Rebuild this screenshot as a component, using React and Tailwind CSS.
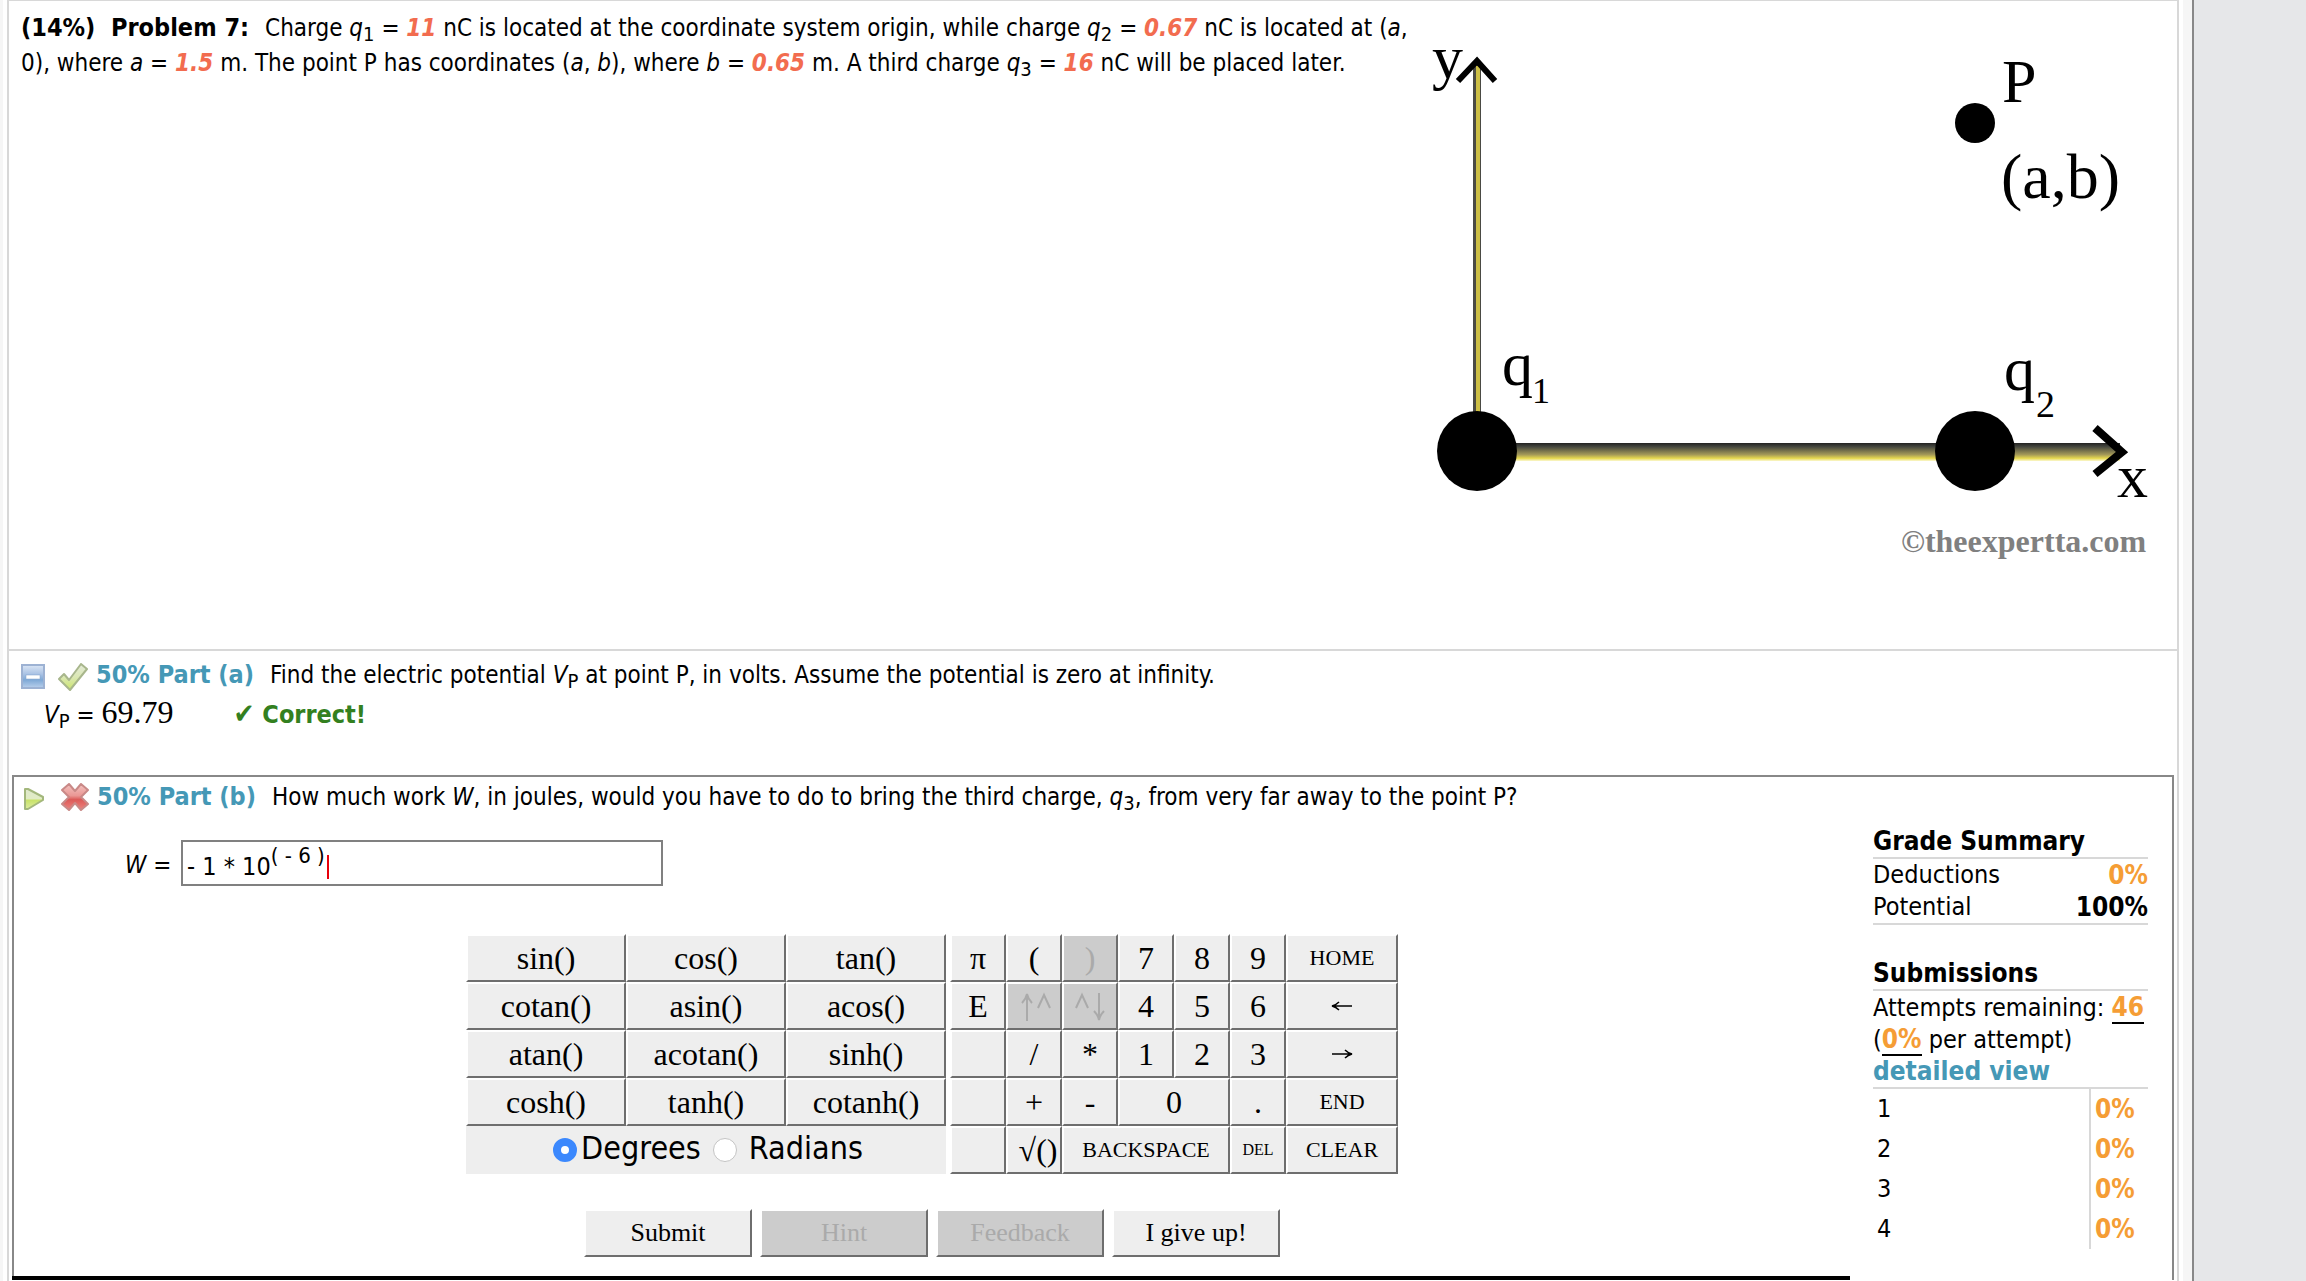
import React, { useState } from "react";

const functionKeys = [
  "sin()",
  "cos()",
  "tan()",
  "cotan()",
  "asin()",
  "acos()",
  "atan()",
  "acotan()",
  "sinh()",
  "cosh()",
  "tanh()",
  "cotanh()",
];

const UpPower = () => (
  <svg viewBox="0 0 30 30" className="mt-0.5 ml-1 size-[30px]" fill="none" stroke="currentColor" strokeWidth="2">
    <path d="M6 29 V2 M1 11 Q5 7 6 2 Q7 7 11 11" />
    <path d="M17 16 L23 3 L29 16" />
  </svg>
);

const DownPower = () => (
  <svg viewBox="0 0 30 30" className="mt-0.5 size-[30px]" fill="none" stroke="currentColor" strokeWidth="2">
    <path d="M1 16 L7 3 L13 16" />
    <path d="M24 1 V28 M19 19 Q23 23 24 28 Q25 23 29 19" />
  </svg>
);

const LeftArrow = () => (
  <svg viewBox="0 0 22 10" className="h-[10px] w-[22px]" fill="none" stroke="currentColor" strokeWidth="1.5">
    <path d="M21 5 H2 M8 1 Q5 4 1 5 Q5 6 8 9" />
  </svg>
);

const RightArrow = () => (
  <svg viewBox="0 0 22 10" className="h-[10px] w-[22px]" fill="none" stroke="currentColor" strokeWidth="1.5">
    <path d="M1 5 H20 M14 1 Q17 4 21 5 Q17 6 14 9" />
  </svg>
);

const padKeys = [
  { label: "π" },
  { label: "(" },
  { label: ")", disabled: true },
  { label: "7" },
  { label: "8" },
  { label: "9" },
  { label: "HOME", size: "text-[22px]" },
  { label: "E" },
  { label: <UpPower />, name: "Power up", disabled: true },
  { label: <DownPower />, name: "Power down", disabled: true },
  { label: "4" },
  { label: "5" },
  { label: "6" },
  { label: <LeftArrow />, name: "Left" },
  { label: "" },
  { label: "/" },
  { label: "*" },
  { label: "1" },
  { label: "2" },
  { label: "3" },
  { label: <RightArrow />, name: "Right" },
  { label: "" },
  { label: "+" },
  { label: "-" },
  { label: "0", span: "col-span-2" },
  { label: "." },
  { label: "END", size: "text-[22px]" },
  { label: "" },
  { label: "√()", span: "pl-2" },
  { label: "BACKSPACE", size: "text-[22px]", span: "col-span-3" },
  { label: "DEL", size: "text-base" },
  { label: "CLEAR", size: "text-[22px]" },
];

const submissions = [1, 2, 3, 4];

const Key = ({ label, name, disabled, size = "text-[32px]", span = "" }) => (
  <button
    type="button"
    aria-label={name}
    disabled={disabled}
    className={`flex h-12 items-center justify-center whitespace-nowrap border-2 border-t-white border-l-white border-r-[#6e6e6e] border-b-[#6e6e6e] pb-px font-['Liberation_Serif',serif] leading-8 ${size} ${span} ${
      disabled ? "bg-[#ccc] text-[#aaa]" : "bg-[#eee] text-black"
    }`}
  >
    {label}
  </button>
);

const Value = ({ children }) => (
  <b className="italic text-[#f26c4f]">{children}</b>
);

const Sub = ({ children }) => <sub className="text-xl leading-none">{children}</sub>;

const Diagram = () => (
  <svg
    viewBox="0 0 750 560"
    className="mt-[19px] mr-3 h-[560px] w-[750px] shrink-0 font-['Liberation_Serif',serif]"
    fontSize="62"
    role="img"
    aria-label="Charges on the coordinate axes"
  >
    <defs>
      <linearGradient id="xAxis" x1="0" y1="0" x2="0" y2="1">
        <stop offset="0" stopColor="#222" />
        <stop offset="0.2" stopColor="#44463e" />
        <stop offset="0.65" stopColor="#a59a58" />
        <stop offset="0.85" stopColor="#e6d84e" />
        <stop offset="1" stopColor="#fbf8d0" />
      </linearGradient>
    </defs>
    {/* y axis */}
    <rect x="58" y="42" width="8" height="360" fill="#4a4a44" />
    <rect x="61" y="46" width="4" height="356" fill="#cdbf45" />
    <path d="M43 61 L62 41 L80 61" fill="none" stroke="#000" strokeWidth="6" />
    {/* x axis */}
    <rect x="62" y="423" width="643" height="18" fill="url(#xAxis)" />
    <path d="M680 408 L707 432 L680 454" fill="none" stroke="#000" strokeWidth="8" />

    <circle cx="62" cy="431" r="40" />
    <circle cx="560" cy="431" r="40" />
    <circle cx="560" cy="103" r="20" />

    <text x="17" y="58">y</text>
    <text x="587" y="82">P</text>
    <text x="586" y="178" fontSize="64">(a,b)</text>
    <text x="87" y="365">q</text>
    <text x="117" y="383" fontSize="36">1</text>
    <text x="589" y="370">q</text>
    <text x="621" y="397" fontSize="38">2</text>
    <text x="702" y="477">x</text>
    <text x="486" y="532" fontSize="32" fontWeight="bold" fill="#808080">
      ©theexpertta.com
    </text>
  </svg>
);

const CollapseIcon = () => (
  <svg viewBox="0 0 26 28" className="mt-1 h-7 w-[26px] shrink-0">
    <defs>
      <linearGradient id="collapse" x1="0" y1="0" x2="0" y2="1">
        <stop offset="0" stopColor="#dbe6f5" />
        <stop offset="0.4" stopColor="#a9c2e4" />
        <stop offset="0.65" stopColor="#7fa9d6" />
        <stop offset="1" stopColor="#b9d0ec" />
      </linearGradient>
    </defs>
    <rect x="2" y="2" width="22" height="23" fill="url(#collapse)" stroke="#9db2d3" strokeWidth="2" />
    <rect x="6" y="12" width="14" height="4" fill="#fff" stroke="#7f9fcb" strokeWidth="0.5" />
  </svg>
);

const CheckIcon = () => (
  <svg viewBox="0 0 30 28" className="mt-1 h-7 w-[30px] shrink-0">
    <defs>
      <linearGradient id="check" x1="0" y1="0" x2="0" y2="1">
        <stop offset="0" stopColor="#e3e9d8" />
        <stop offset="0.5" stopColor="#dbe8b4" />
        <stop offset="1" stopColor="#cbe56c" />
      </linearGradient>
    </defs>
    <path
      d="M1 16 L6 11 L11 17 L23 1 L29 6 L12 27 Z"
      fill="url(#check)"
      stroke="#a8b68c"
      strokeWidth="2"
      strokeLinejoin="round"
    />
  </svg>
);

const PlayIcon = () => (
  <svg viewBox="0 0 24 24" className="mt-1 h-6 w-6 shrink-0">
    <defs>
      <linearGradient id="play" x1="0" y1="0" x2="0" y2="1">
        <stop offset="0" stopColor="#dfe8cd" />
        <stop offset="0.5" stopColor="#e1ecc4" />
        <stop offset="0.55" stopColor="#c8e268" />
        <stop offset="1" stopColor="#dcec9e" />
      </linearGradient>
    </defs>
    <path
      d="M3 2 L6 2 L21 10 L21 13 L6 22 L3 22 Z"
      fill="url(#play)"
      stroke="#a3b77c"
      strokeWidth="2"
      strokeLinejoin="round"
    />
  </svg>
);

const CrossIcon = () => (
  <svg viewBox="0 0 28 28" className="h-7 w-7 shrink-0">
    <defs>
      <linearGradient id="cross" x1="0" y1="0" x2="0" y2="1">
        <stop offset="0" stopColor="#f3c3c0" />
        <stop offset="0.45" stopColor="#ea9794" />
        <stop offset="0.6" stopColor="#dc5a58" />
        <stop offset="1" stopColor="#ee8580" />
      </linearGradient>
    </defs>
    <path
      d="M8 1 L14 8 L20 1 L27 7 L20 14 L27 21 L20 27 L14 20 L8 27 L1 21 L8 14 L1 7 Z"
      fill="url(#cross)"
      stroke="#c98987"
      strokeWidth="2"
      strokeLinejoin="round"
    />
  </svg>
);

const AngleMode = () => {
  const [mode, setMode] = useState("degrees");
  const radio =
    "mt-1 size-6 appearance-none rounded-full border border-[#c4c4c4] bg-white checked:border-[8px] checked:border-[#3b88fd]";

  return (
    <div className="col-span-3 flex h-12 items-center justify-center bg-[#eee] pb-1 pl-1 text-[32px] leading-10">
      <label className="flex items-center gap-1">
        <input
          type="radio"
          name="angle"
          className={radio}
          checked={mode === "degrees"}
          onChange={() => setMode("degrees")}
        />
        Degrees
      </label>
      <label className="ml-3 flex items-center gap-3">
        <input
          type="radio"
          name="angle"
          className={radio}
          checked={mode === "radians"}
          onChange={() => setMode("radians")}
        />
        Radians
      </label>
    </div>
  );
};

const GradeSummary = () => (
  <aside className="mt-2 mr-6 w-[275px] shrink-0 text-[25px] leading-8">
    <h2 className="h-[34px] border-b-2 border-[#d8d8d8] text-[26px] font-bold leading-8">Grade Summary</h2>
    <dl className="border-b-2 border-[#d8d8d8]">
      <div className="flex h-8 justify-between">
        <dt>Deductions</dt>
        <dd className="text-[26px] font-bold text-[#f59d35]">0%</dd>
      </div>
      <div className="flex h-8 justify-between">
        <dt>Potential</dt>
        <dd className="text-[26px] font-bold">100%</dd>
      </div>
    </dl>
    <h2 className="mt-8 h-[34px] border-b-2 border-[#d8d8d8] text-[26px] font-bold leading-8">Submissions</h2>
    <p className="h-8 whitespace-nowrap">
      Attempts remaining:{" "}
      <b className="border-b-2 border-black text-[26px] text-[#f59d35]">46</b>
    </p>
    <p className="h-8">
      (<b className="border-b-2 border-black text-[26px] text-[#f59d35]">0%</b> per attempt)
    </p>
    <a
      href="#detailed"
      className="block h-[34px] border-b-2 border-[#d8d8d8] text-[26px] font-bold leading-8 text-[#4598b6]"
    >
      detailed view
    </a>
    <table className="w-full border-collapse">
      <tbody>
        {submissions.map((n) => (
          <tr key={n} className="h-10">
            <td className="pl-1">{n}</td>
            <td className="w-[58px] border-l-2 border-[#d8d8d8] pl-1 text-[26px] font-bold text-[#f59d35]">
              0%
            </td>
          </tr>
        ))}
      </tbody>
    </table>
  </aside>
);

const App = () => {
  return (
    <div className="flex min-h-screen overflow-hidden bg-white font-['DejaVu_Sans_Condensed','DejaVu_Sans',sans-serif] text-2xl text-black">
      <div className="w-[3px] shrink-0 bg-[#f6f6f6]" />
      <main className="mx-1 min-w-0 flex-1 border-x-2 border-t border-[#d8d8d8]">
        {/* Problem statement */}
        <section className="flex h-[650px] items-start justify-between border-b-2 border-[#d8d8d8] pl-3">
          <p className="mt-[10px] w-[1400px] leading-[35px]">
            <b className="mr-4 text-[25px] leading-none">(14%)&nbsp; Problem 7:</b>
            Charge <i>q</i>
            <Sub>1</Sub> = <Value>11</Value> nC is located at the coordinate system origin, while
            charge <i>q</i>
            <Sub>2</Sub> = <Value>0.67</Value> nC is located at (<i>a</i>,
            <br />
            0), where <i>a</i> = <Value>1.5</Value> m. The point P has coordinates (<i>a</i>,{" "}
            <i>b</i>), where <i>b</i> = <Value>0.65</Value> m. A third charge <i>q</i>
            <Sub>3</Sub> = <Value>16</Value> nC will be placed later.
          </p>
          <Diagram />
        </section>

        {/* Part a */}
        <section className="h-[124px] pt-2 pl-[11px]">
          <div className="flex h-8 items-center leading-8">
            <CollapseIcon />
            <span className="ml-3 flex">
              <CheckIcon />
            </span>
            <b className="ml-2 text-[25px] text-[#4598b6]">50% Part (a)</b>
            <p className="ml-4">
              Find the electric potential <i>V</i>
              <Sub>P</Sub> at point P, in volts. Assume the potential is zero at infinity.
            </p>
          </div>
          <div className="mt-px flex items-baseline pl-6 leading-10">
            <p>
              <i>V</i>
              <Sub>P</Sub> ={" "}
              <span className="font-['Liberation_Serif',serif] text-[32px] leading-10">69.79</span>
            </p>
            <b className="ml-15 text-[25px] text-[#33801f]">
              <span className="text-[28px]">✔</span> Correct!
            </b>
          </div>
        </section>

        {/* Part b */}
        <section className="mx-[3px] border-2 border-b-0 border-[#888]">
          <div className="flex h-10 items-center pl-2 leading-8">
            <PlayIcon />
            <span className="ml-[15px] flex">
              <CrossIcon />
            </span>
            <b className="ml-2 text-[25px] text-[#4598b6]">50% Part (b)</b>
            <p className="ml-4">
              How much work <i>W</i>, in joules, would you have to do to bring the third charge,{" "}
              <i>q</i>
              <Sub>3</Sub>, from very far away to the point P?
            </p>
          </div>

          <div className="flex items-start justify-between">
            <div className="-ml-0.5 max-w-[1838px] flex-1 border-b-4 border-black pb-[19px] pl-0.5">
              <div className="mt-[23px] flex items-center pl-[111px]">
                <span id="work-label" className="w-14 pt-1">
                  <i>W</i> =
                </span>
                <div
                  role="textbox"
                  aria-labelledby="work-label"
                  contentEditable
                  suppressContentEditableWarning
                  className="flex h-[46px] w-[482px] items-center whitespace-pre border-2 border-[#808080] px-1 pt-2 text-[25px] outline-none"
                >
                  - 1 * 10<sup className="text-[22px]">( - 6 )</sup>
                  <span className="ml-0.5 h-6 w-0.5 bg-red-600" />
                </div>
              </div>

              <div className="mt-12 flex justify-center gap-1">
                <div className="grid grid-cols-[160px_160px_160px] content-start">
                  {functionKeys.map((label) => (
                    <Key key={label} label={label} />
                  ))}
                  <AngleMode />
                </div>
                <div className="grid grid-cols-[repeat(6,56px)_112px] content-start">
                  {padKeys.map((key, i) => (
                    <Key key={i} {...key} />
                  ))}
                </div>
              </div>

              <div className="mx-auto mt-[35px] grid w-[696px] grid-cols-4 gap-2">
                <Key label="Submit" size="text-[26px]" />
                <Key label="Hint" size="text-[26px]" disabled />
                <Key label="Feedback" size="text-[26px]" disabled />
                <Key label="I give up!" size="text-[26px]" />
              </div>
            </div>
            <GradeSummary />
          </div>
        </section>
      </main>
      <div className="w-[9px] shrink-0 bg-[#f6f6f6]" />
      <div className="w-[114px] shrink-0 border-l-2 border-[#888] bg-[#e6e7e9]" />
    </div>
  );
};

export default App;
